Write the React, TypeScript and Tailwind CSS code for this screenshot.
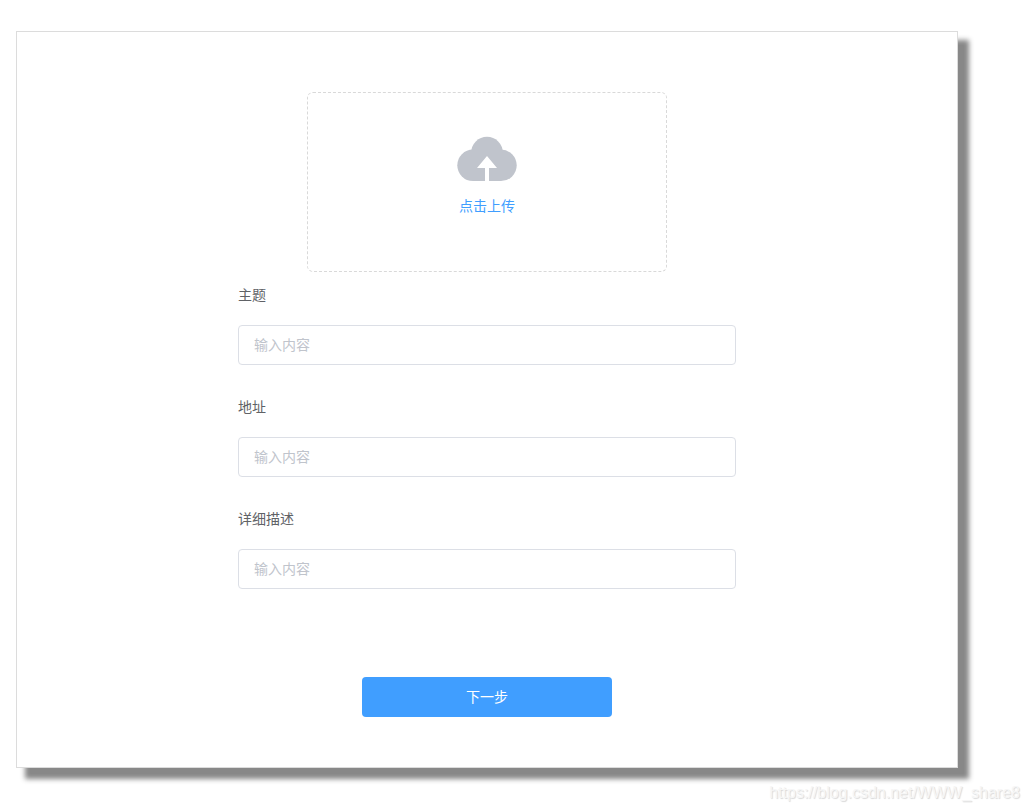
const fields = [
  { id: 'subject', label: '主题' },
  { id: 'address', label: '地址' },
  { id: 'description', label: '详细描述' },
];

function CloudUpload() {
  return (
    <svg viewBox="0 0 60 45" className="h-[45px] w-15" fill="#c0c4cc" aria-hidden="true">
      <circle cx="16" cy="29.3" r="15.7" />
      <circle cx="44" cy="29.3" r="15.7" />
      <circle cx="30" cy="16.6" r="15.8" />
      <path d="M16 20H44V45H16Z" />
      <path d="M28 45V32H20L30 20L40 32H32V45Z" fill="#ffffff" />
    </svg>
  );
}

export default function App() {
  return (
    <div className="bg-white pt-[31px] pr-[71px] pl-4 font-['Noto_Sans_CJK_SC',sans-serif] text-sm text-[#606266]">
      <main className="border border-[#dcdcdc] bg-white px-6 pt-15 pb-[50px] shadow-[10px_10px_5px_1px_#888888]">
        <form className="mx-auto flex max-w-[498px] flex-col" onSubmit={(e) => e.preventDefault()}>
          <button
            type="button"
            className="mx-auto flex h-[180px] w-full max-w-[360px] cursor-pointer flex-col items-center rounded-md border border-dashed border-[#d9d9d9] pt-[43px]"
          >
            <CloudUpload />
            <span className="mt-[14px] leading-5 text-[#409eff]">点击上传</span>
          </button>
          <div className="mt-[3px] flex flex-col gap-[22px]">
            {fields.map((field) => (
              <div key={field.id} className="flex flex-col gap-3">
                <label htmlFor={field.id} className="leading-[38px]">
                  {field.label}
                </label>
                <input
                  id={field.id}
                  type="text"
                  placeholder="输入内容"
                  className="h-10 w-full rounded border border-[#dcdfe6] bg-white px-[15px] pb-[2px] outline-none placeholder:text-[#c0c4cc] focus:border-[#409eff]"
                />
              </div>
            ))}
          </div>
          <button
            type="submit"
            className="mx-auto mt-22 h-10 w-full max-w-[250px] cursor-pointer rounded bg-[#409eff] pb-[2px] text-white"
          >
            下一步
          </button>
        </form>
      </main>
      <footer className="-mr-[62px] pt-[15px] text-right font-['Liberation_Sans',Arial,sans-serif] text-base leading-5 text-[#f6f6f6] [text-shadow:1px_1px_1px_#d8d8d8]">
        https://blog.csdn.net/WWW_share8
      </footer>
    </div>
  );
}
